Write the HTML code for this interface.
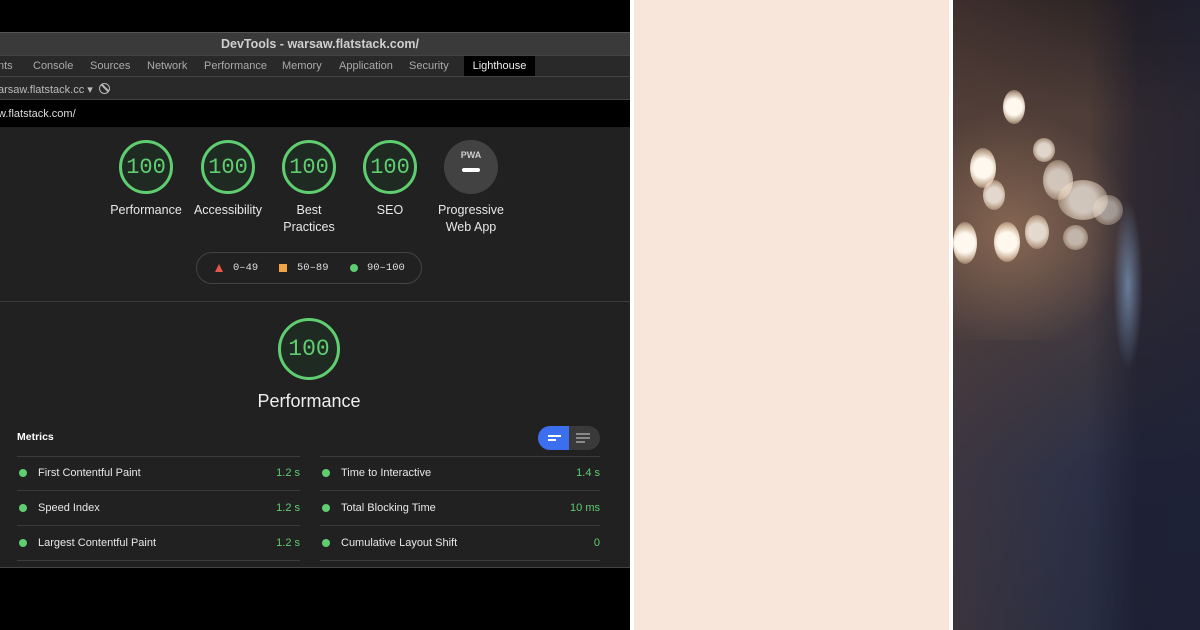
<!DOCTYPE html>
<html><head><meta charset="utf-8"><style>
*{margin:0;padding:0;box-sizing:border-box}
body{width:1200px;height:630px;overflow:hidden;background:#000;position:relative;font-family:"Liberation Sans",sans-serif}
.a{position:absolute}
.t{color:#ddd;font-size:11px}
.g{position:absolute;width:54px;height:54px;border-radius:50%;border:3.5px solid #5fce70;background:#1f2b22;color:#5fce70;font-family:"Liberation Mono",monospace;font-size:22px;display:flex;align-items:center;justify-content:center}
.lab{position:absolute;width:90px;text-align:center;color:#e8e8e8;font-size:12.5px;line-height:17px}
.row{position:absolute;height:35px;border-bottom:1px solid #3c3c3c;color:#e8e8e8;font-size:11px;display:flex;align-items:center}
.row i{width:8px;height:8px;border-radius:50%;background:#5fce70;margin:0 11px 0 2px}
.row b{font-weight:normal;margin-left:auto;color:#5fce70}
.bl{position:absolute;border-radius:50%;background:radial-gradient(circle,#fff8ee 40%,rgba(255,230,200,.6) 70%,transparent)}
</style></head><body>
<div class="a" style="left:0;top:32px;width:630px;height:535px;background:#212121"></div>
<div class="a" style="left:0;top:32px;width:630px;height:23px;background:#3b3a3a;border-top:1px solid #555;color:#cfcfcf;font-size:12.5px;font-weight:bold;text-align:center;line-height:22px;padding-left:10px">DevTools - warsaw.flatstack.com/</div>
<div class="a" style="left:0;top:55px;width:630px;height:22px;background:#292929;border-top:1px solid #444;border-bottom:1px solid #444"></div>
<div class="a t" style="top:60px;left:-2px;color:#aaa">nts</div>
<div class="a t" style="top:60px;left:33px;color:#aaa">Console</div>
<div class="a t" style="top:60px;left:90px;color:#aaa">Sources</div>
<div class="a t" style="top:60px;left:147px;color:#aaa">Network</div>
<div class="a t" style="top:60px;left:204px;color:#aaa">Performance</div>
<div class="a t" style="top:60px;left:282px;color:#aaa">Memory</div>
<div class="a t" style="top:60px;left:339px;color:#aaa">Application</div>
<div class="a t" style="top:60px;left:409px;color:#aaa">Security</div>
<div class="a" style="top:56px;left:464px;width:71px;height:20px;background:#000;color:#eee;font-size:11px;text-align:center;line-height:20px">Lighthouse</div>
<div class="a" style="left:0;top:77px;width:630px;height:23px;background:#292929;border-bottom:1px solid #444"></div>
<div class="a t" style="top:83px;left:-2px;color:#bbb">arsaw.flatstack.cc ▾</div>
<div class="a" style="top:83px;left:99px;width:11px;height:11px;border:1.5px solid #bbb;border-radius:50%"><div style="position:absolute;left:3.5px;top:-1px;width:1.5px;height:10px;background:#bbb;transform:rotate(-45deg)"></div></div>
<div class="a" style="left:0;top:100px;width:630px;height:27px;background:#000"></div>
<div class="a t" style="top:108px;left:-2px;color:#ddd">w.flatstack.com/</div>

<div class="g" style="left:119px;top:140px">100</div>
<div class="g" style="left:201px;top:140px">100</div>
<div class="g" style="left:282px;top:140px">100</div>
<div class="g" style="left:363px;top:140px">100</div>
<div class="a" style="left:444px;top:140px;width:54px;height:54px;border-radius:50%;background:#424242"><div style="position:absolute;top:10px;width:100%;text-align:center;color:#ccc;font-size:9px;font-weight:bold">PWA</div><div style="position:absolute;left:18px;top:28px;width:18px;height:4px;border-radius:2px;background:#fff"></div></div>
<div class="lab" style="left:101px;top:202px">Performance</div>
<div class="lab" style="left:183px;top:202px">Accessibility</div>
<div class="lab" style="left:264px;top:202px">Best<br>Practices</div>
<div class="lab" style="left:345px;top:202px">SEO</div>
<div class="lab" style="left:426px;top:202px">Progressive<br>Web App</div>
<div class="a" style="left:196px;top:252px;width:226px;height:32px;border:1px solid #444;border-radius:16px;font-family:'Liberation Mono',monospace;font-size:10.5px;color:#ddd">
<div class="a" style="left:18px;top:11px;width:0;height:0;border-left:4.5px solid transparent;border-right:4.5px solid transparent;border-bottom:8px solid #e5574a"></div><span class="a" style="left:36px;top:9px">0–49</span>
<div class="a" style="left:82px;top:11px;width:8px;height:8px;background:#f2a443"></div><span class="a" style="left:100px;top:9px">50–89</span>
<div class="a" style="left:153px;top:11px;width:8px;height:8px;border-radius:50%;background:#5fce70"></div><span class="a" style="left:170px;top:9px">90–100</span></div>
<div class="a" style="left:0;top:301px;width:630px;height:1px;background:#3c3c3c"></div>
<div class="g" style="left:278px;top:318px;width:62px;height:62px;font-size:23px">100</div>
<div class="a" style="left:209px;top:391px;width:200px;text-align:center;color:#eee;font-size:18px">Performance</div>
<div class="a" style="left:17px;top:431px;color:#fff;font-size:10.5px;font-weight:bold">Metrics</div>
<div class="a" style="left:538px;top:426px;width:62px;height:24px;border-radius:12px;background:#3a3a3a;overflow:hidden"><div style="position:absolute;left:0;top:0;width:31px;height:24px;background:#3b6ff0"></div>
<div style="position:absolute;left:10px;top:9px;width:13px;height:2px;background:#fff"></div><div style="position:absolute;left:10px;top:13px;width:8px;height:2px;background:#fff"></div>
<div style="position:absolute;left:38px;top:7px;width:14px;height:2px;background:#888"></div><div style="position:absolute;left:38px;top:11px;width:14px;height:2px;background:#888"></div><div style="position:absolute;left:38px;top:15px;width:9px;height:2px;background:#888"></div></div>
<div class="a" style="left:17px;top:456px;width:283px;height:1px;background:#3c3c3c"></div>
<div class="a" style="left:320px;top:456px;width:280px;height:1px;background:#3c3c3c"></div>
<div class="row" style="left:17px;top:456px;width:283px"><i></i>First Contentful Paint<b>1.2 s</b></div>
<div class="row" style="left:17px;top:491px;width:283px"><i></i>Speed Index<b>1.2 s</b></div>
<div class="row" style="left:17px;top:526px;width:283px"><i></i>Largest Contentful Paint<b>1.2 s</b></div>
<div class="row" style="left:320px;top:456px;width:280px"><i></i>Time to Interactive<b>1.4 s</b></div>
<div class="row" style="left:320px;top:491px;width:280px"><i></i>Total Blocking Time<b>10 ms</b></div>
<div class="row" style="left:320px;top:526px;width:280px"><i></i>Cumulative Layout Shift<b>0</b></div>
<div class="a" style="left:0;top:567px;width:630px;height:1px;background:#444"></div>

<div class="a" style="left:630px;top:0;width:323px;height:630px;background:#fff"></div>
<div class="a" style="left:634px;top:0;width:315px;height:630px;background:#f8e6da"></div>
<div class="a" style="left:953px;top:0;width:247px;height:630px;overflow:hidden;background:linear-gradient(180deg,#2e2526 0%,#4e3d38 18%,#4d3f3e 40%,#3a3640 58%,#2c3047 75%,#282d42 100%)">
<div class="a" style="left:0;top:0;width:247px;height:630px;background:linear-gradient(90deg,rgba(90,65,55,.35) 0%,rgba(0,0,0,0) 55%,rgba(20,22,40,.55) 75%,rgba(25,28,48,.7) 100%)"></div>
<div class="a" style="left:-30px;top:100px;width:220px;height:240px;background:radial-gradient(ellipse at 40% 55%,rgba(200,150,110,.45),transparent 65%)"></div>
<div class="a" style="left:160px;top:200px;width:30px;height:170px;background:radial-gradient(ellipse at 50% 50%,rgba(150,190,235,.55),transparent 70%)"></div>
<div class="bl" style="left:0;top:222px;width:24px;height:42px"></div>
<div class="bl" style="left:17px;top:148px;width:26px;height:40px"></div>
<div class="bl" style="left:50px;top:90px;width:22px;height:34px"></div>
<div class="bl" style="left:41px;top:222px;width:26px;height:40px"></div>
<div class="bl" style="left:30px;top:180px;width:22px;height:30px;opacity:.8"></div>
<div class="bl" style="left:72px;top:215px;width:24px;height:34px;opacity:.8"></div>
<div class="bl" style="left:80px;top:138px;width:22px;height:24px;opacity:.8"></div>
<div class="bl" style="left:90px;top:160px;width:30px;height:40px;opacity:.7"></div>
<div class="bl" style="left:105px;top:180px;width:50px;height:40px;opacity:.7"></div>
<div class="bl" style="left:110px;top:225px;width:25px;height:25px;opacity:.6"></div>
<div class="bl" style="left:140px;top:195px;width:30px;height:30px;opacity:.5"></div>
</div>
</body></html>
